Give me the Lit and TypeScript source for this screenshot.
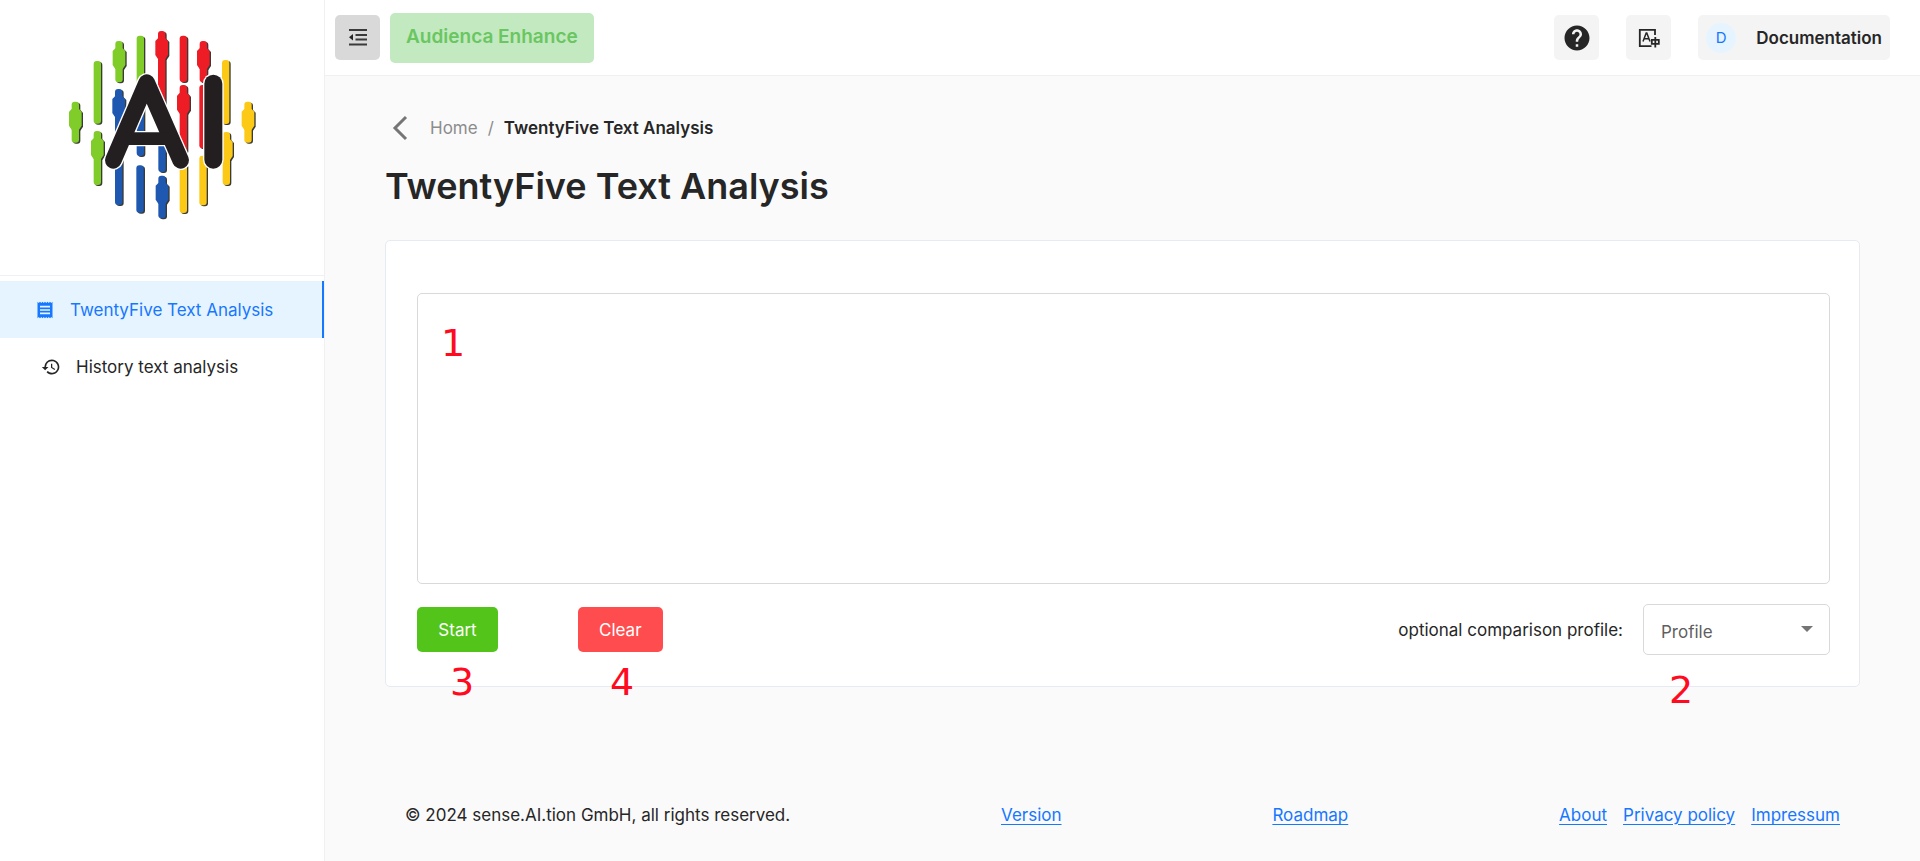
import { LitElement, html, css, svg } from "lit";
import { customElement, state } from "lit/decorators.js";

type Bar = { x: number; top: number; bottom: number; color: string; body?: number };

const GREEN = "#80cc28";
const RED = "#ee1c25";
const BLUE = "#1f58b0";
const YELLOW = "#fcc917";

const bars: Bar[] = [
  { x: 76, top: 245, bottom: 368, color: GREEN, body: 270 },
  { x: 142, top: 123, bottom: 311, color: GREEN },
  { x: 142, top: 333, bottom: 495, color: GREEN, body: 358 },
  { x: 207, top: 63, bottom: 187, color: GREEN, body: 88 },
  { x: 206, top: 207, bottom: 380, color: BLUE, body: 232 },
  { x: 206, top: 400, bottom: 555, color: BLUE },
  { x: 271, top: 47, bottom: 200, color: GREEN },
  { x: 271, top: 225, bottom: 408, color: BLUE },
  { x: 270, top: 436, bottom: 578, color: BLUE },
  { x: 335, top: 33, bottom: 260, color: RED, body: 58 },
  { x: 336, top: 350, bottom: 456, color: BLUE },
  { x: 336, top: 467, bottom: 595, color: BLUE, body: 492 },
  { x: 400, top: 47, bottom: 186, color: RED },
  { x: 400, top: 195, bottom: 400, color: RED, body: 222 },
  { x: 400, top: 430, bottom: 579, color: YELLOW },
  { x: 460, top: 63, bottom: 187, color: RED, body: 88 },
  { x: 459, top: 195, bottom: 385, color: RED },
  { x: 459, top: 407, bottom: 556, color: YELLOW },
  { x: 527, top: 120, bottom: 312, color: YELLOW },
  { x: 529, top: 336, bottom: 495, color: YELLOW, body: 361 },
  { x: 594, top: 245, bottom: 368, color: YELLOW, body: 270 },
];

const barShape = (b: Bar, color: string) => svg`
  <rect x=${b.x - 11} y=${b.top} width="22" height=${b.bottom - b.top} rx="9" fill=${color}></rect>
  ${b.body === undefined
    ? null
    : svg`<path fill=${color} d=${`M${b.x - 11} ${b.body - 3}h22l8 8v42l-8 12h-22l-8-12v-42z`}></path>`}
`;

@customElement("brand-logo")
class BrandLogo extends LitElement {
  static styles = css`
    :host { display: block; }
    svg { display: block; width: 220px; height: 210px; }
  `;
  render() {
    return html`
      <svg viewBox="0 0 660 630" role="img" aria-label="AI">
        <g transform="translate(4 3)">${bars.map((b) => barShape(b, "#3a3a36"))}</g>
        ${bars.map((b) => barShape(b, b.color))}
        <g fill="none" stroke-linecap="round" stroke-linejoin="round">
          <g stroke="#fff">
            <path stroke-width="58" d="M190 421 290 188 392 421"></path>
            <path stroke-width="46" stroke-linecap="butt" d="M222 356H360"></path>
            <path stroke-width="62" d="M490 191V419"></path>
          </g>
          <g stroke="#231f20">
            <path stroke-width="50" d="M190 421 290 188 392 421"></path>
            <path stroke-width="38" stroke-linecap="butt" d="M222 356H360"></path>
            <path stroke-width="54" d="M490 191V419"></path>
          </g>
        </g>
      </svg>
    `;
  }
}

@customElement("app-root")
class AppRoot extends LitElement {
  @state() private text = "";

  static styles = css`
    :host {
      display: grid;
      grid-template-columns: 325px minmax(0, 1fr);
      min-height: 100vh;
      font-family: Inter, "Open Sans", sans-serif;
      font-size: 17px;
      line-height: 28px;
      color: #262626;
      background: #fafafb;
    }
    * { box-sizing: border-box; }
    button, select, textarea { font: inherit; color: inherit; margin: 0; }
    button { cursor: pointer; }
    svg { display: block; flex: none; }

    .sidebar { background: #fff; border-right: 1px solid #f0f0f0; }
    .brand { padding: 20px 50px 45px; border-bottom: 1px solid #f0f0f0; }
    .menu { display: flex; flex-direction: column; padding-top: 5px; }
    .item {
      display: flex;
      align-items: center;
      height: 57px;
      padding-left: 35px;
      gap: 15px;
      color: inherit;
      text-decoration: none;
    }
    .item.sub { padding-left: 41px; }
    .item.active { color: #1677ff; background: #e6f4ff; border-right: 2px solid #1677ff; }

    .page { display: flex; flex-direction: column; min-width: 0; }
    .topbar {
      display: flex;
      align-items: center;
      height: 76px;
      padding: 0 30px 0 10px;
      background: #fff;
      border-bottom: 1px solid #f0f0f0;
    }
    .icon-button {
      display: grid;
      place-items: center;
      width: 45px;
      height: 45px;
      padding: 0;
      border: 0;
      border-radius: 5px;
      background: #f4f4f4;
    }
    .icon-button.toggle { background: #d9d9d9; }
    .product {
      height: 50px;
      margin-left: 10px;
      padding: 10px 16px;
      border-radius: 5px;
      background: #c3e9c0;
      color: #69c661;
      font-size: 19px;
      font-weight: 600;
    }
    .tools { display: flex; margin-left: auto; gap: 27px; }
    .account {
      display: flex;
      align-items: center;
      height: 45px;
      padding: 0 8px;
      gap: 20px;
      border: 0;
      border-radius: 5px;
      background: #f4f4f4;
      font-weight: 600;
    }
    .avatar {
      display: grid;
      place-items: center;
      width: 30px;
      height: 30px;
      border-radius: 50%;
      background: #e6f4ff;
      color: #1677ff;
      font-size: 15px;
      font-weight: 400;
    }

    main { padding: 36px 60px 0; }
    .crumbs { display: flex; align-items: center; height: 32px; }
    .back { display: block; padding: 0 22px 0 7px; border: 0; background: none; color: #757575; }
    .crumbs a { color: #8c8c8c; text-decoration: none; }
    .slash { padding: 0 10px; color: #8c8c8c; }
    .here { font-weight: 600; }
    h1 { margin: 19px 0 30px; font-size: 36px; line-height: 47px; font-weight: 600; }

    .card {
      padding: 52px 29px 31px 31px;
      border: 1px solid #e6ebf1;
      border-radius: 5px;
      background: #fff;
    }
    .entry { position: relative; }
    textarea {
      display: block;
      width: 100%;
      height: 291px;
      padding: 20px;
      border: 1px solid #d9d9d9;
      border-radius: 5px;
      background: #fff;
      resize: none;
    }
    .actions { display: flex; align-items: center; margin-top: 20px; }
    .action { position: relative; }
    .action + .action { margin-left: 80px; }
    .primary {
      display: block;
      min-width: 81px;
      height: 45px;
      padding: 0 21px;
      border: 0;
      border-radius: 5px;
      color: #fff;
    }
    .start { background: #52c41a; }
    .clear { background: #ff4d4f; }
    .profile { position: relative; display: flex; align-items: center; gap: 20px; margin-left: auto; }
    .picker { position: relative; }
    select {
      appearance: none;
      display: block;
      width: 187px;
      height: 51px;
      padding: 4px 40px 0 17px;
      border: 1px solid #d9d9d9;
      border-radius: 5px;
      background: #fff;
      color: #5f5f5f;
    }
    .arrow { position: absolute; right: 17px; top: 22px; pointer-events: none; }
    .mark {
      position: absolute;
      color: #ff0a1e;
      font-family: "DejaVu Sans", sans-serif;
      font-size: 38px;
      line-height: 44px;
      pointer-events: none;
    }
    .mark.one { left: 24px; top: 28px; }
    .mark.two { left: 26px; top: 64px; }
    .mark.three { left: 33px; top: 53px; }
    .mark.four { left: 32px; top: 53px; }

    footer {
      display: flex;
      justify-content: space-between;
      margin-top: auto;
      padding: 0 80px 32px;
    }
    footer a { color: #1677ff; text-underline-offset: 3px; }
    .legal { display: flex; gap: 16px; }
  `;

  render() {
    return html`
      <aside class="sidebar">
        <div class="brand"><brand-logo></brand-logo></div>
        <nav class="menu">
          <a class="item active" href="#analysis">
            <svg width="20" height="20" viewBox="0 0 24 24" fill="currentColor" aria-hidden="true">
              <path d="M18 17H6v-2h12v2zm0-4H6v-2h12v2zm0-4H6V7h12v2zM3 22l1.500-1.500L6 22l1.500-1.500L9 22l1.500-1.500L12 22l1.500-1.500L15 22l1.500-1.500L18 22l1.500-1.500L21 22V2l-1.500 1.500L18 2l-1.500 1.500L15 2l-1.500 1.500L12 2l-1.500 1.500L9 2 7.500 3.500 6 2 4.500 3.500 3 2v20z"></path>
            </svg>
            TwentyFive Text Analysis
          </a>
          <a class="item sub" href="#history">
            <svg width="20" height="20" viewBox="0 0 24 24" fill="currentColor" aria-hidden="true">
              <path d="M13 3a9 9 0 0 0-9 9H1l3.890 3.890.070.140L9 12H6a7 7 0 1 1 2.060 4.940l-1.420 1.420A9 9 0 1 0 13 3zm-1 5v5l4.280 2.540.720-1.210-3.500-2.080V8H12z"></path>
            </svg>
            History text analysis
          </a>
        </nav>
      </aside>
      <div class="page">
        <header class="topbar">
          <button class="icon-button toggle" aria-label="Collapse menu">
            <svg width="18" height="17" viewBox="0 0 18 17" aria-hidden="true">
              <path d="M0 1h18M6.500 6H18M6.500 10.500H18M0 15.500h18" stroke="#3a3a3a" stroke-width="1.800"></path>
              <path d="M0 8.250 4 5v6.500z" fill="#262626"></path>
            </svg>
          </button>
          <div class="product">Audienca Enhance</div>
          <div class="tools">
            <button class="icon-button" aria-label="Help">
              <svg width="30" height="30" viewBox="0 0 24 24" fill="#262626" aria-hidden="true">
                <path d="M12 2C6.480 2 2 6.480 2 12s4.480 10 10 10 10-4.480 10-10S17.520 2 12 2zm1 17h-2v-2h2v2zm2.070-7.750-.9.920C13.450 12.900 13 13.500 13 15h-2v-.5c0-1.100.450-2.100 1.170-2.830l1.240-1.260c.370-.360.590-.860.590-1.410 0-1.100-.9-2-2-2s-2 .9-2 2H8c0-2.210 1.790-4 4-4s4 1.790 4 4c0 .880-.360 1.680-.930 2.250z"></path>
              </svg>
            </button>
            <button class="icon-button" aria-label="Language">
              <svg width="22" height="20" viewBox="0 0 22 20" fill="none" stroke="#262626" stroke-width="1.800" aria-hidden="true">
                <path d="M17 7V1.800H1.800V18.200H13.500"></path>
                <path d="M5 13.500 8.200 5h.6L12 13.500M6.200 10.800h4.600" stroke-width="1.500"></path>
                <path d="M13.800 11.800h7v4h-7zM17.300 9v10.500"></path>
              </svg>
            </button>
            <button class="account"><span class="avatar">D</span>Documentation</button>
          </div>
        </header>
        <main>
          <nav class="crumbs" aria-label="Breadcrumb">
            <button class="back" aria-label="Back">
              <svg width="16" height="26" viewBox="0 0 16 26" fill="none" stroke="currentColor" stroke-width="3" aria-hidden="true">
                <path d="M14 2 3 13 14 24"></path>
              </svg>
            </button>
            <a href="#home">Home</a><span class="slash">/</span><span class="here">TwentyFive Text Analysis</span>
          </nav>
          <h1>TwentyFive Text Analysis</h1>
          <section class="card">
            <div class="entry">
              <textarea
                aria-label="Text to analyse"
                .value=${this.text}
                @input=${(e: Event) => (this.text = (e.target as HTMLTextAreaElement).value)}
              ></textarea>
              <span class="mark one">1</span>
            </div>
            <div class="actions">
              <div class="action">
                <button class="primary start">Start</button>
                <span class="mark three">3</span>
              </div>
              <div class="action">
                <button class="primary clear" @click=${() => (this.text = "")}>Clear</button>
                <span class="mark four">4</span>
              </div>
              <div class="profile">
                <label for="profile">optional comparison profile:</label>
                <div class="picker">
                  <select id="profile"><option>Profile</option></select>
                  <svg class="arrow" width="12" height="6" viewBox="0 0 12 6" fill="#757575" aria-hidden="true">
                    <path d="M0 0h12L6 6z"></path>
                  </svg>
                  <span class="mark two">2</span>
                </div>
              </div>
            </div>
          </section>
        </main>
        <footer>
          <span>© 2024 sense.AI.tion GmbH, all rights reserved.</span>
          <a href="#version">Version</a>
          <a href="#roadmap">Roadmap</a>
          <span class="legal">
            <a href="#about">About</a>
            <a href="#privacy">Privacy policy</a>
            <a href="#impressum">Impressum</a>
          </span>
        </footer>
      </div>
    `;
  }
}
